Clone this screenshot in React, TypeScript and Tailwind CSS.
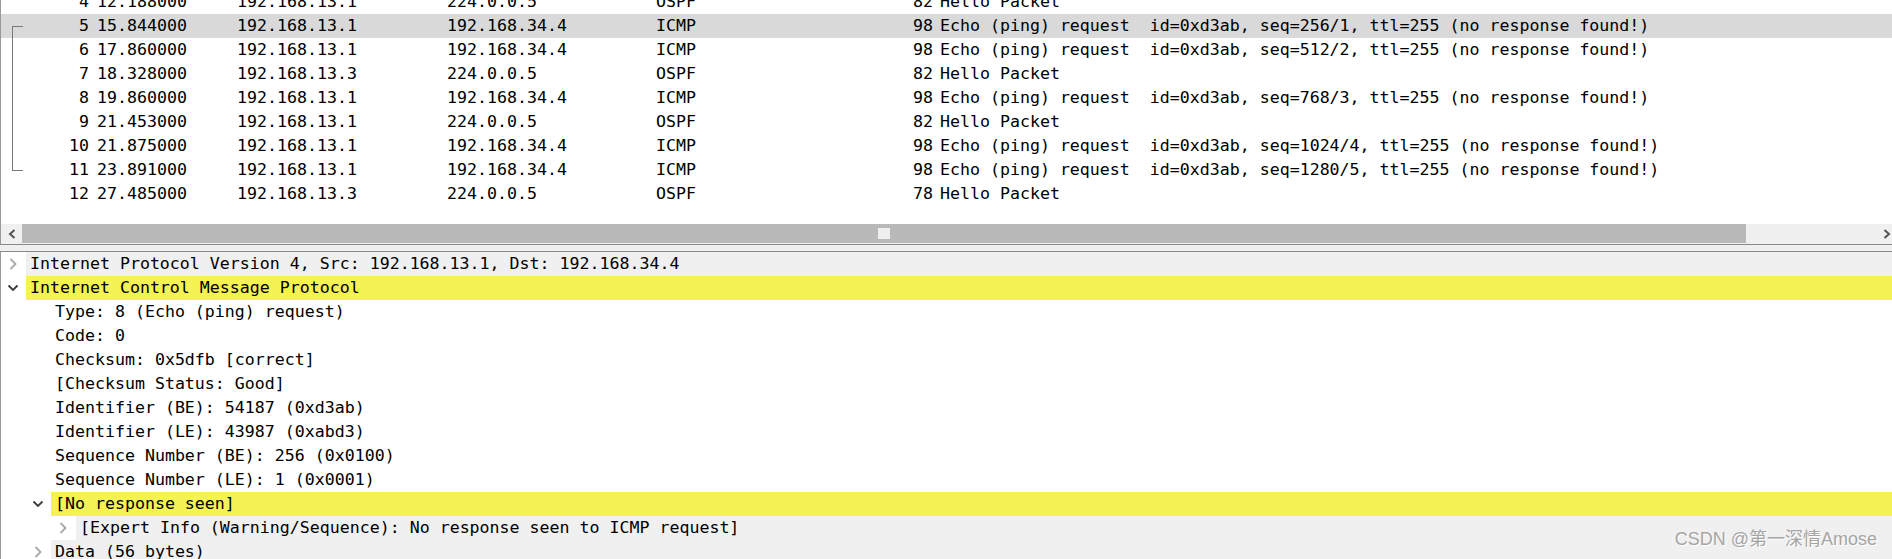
import React from "react";

type Pkt = { no: number; time: string; src: string; dst: string; proto: string; len: number; info: string };

const echo = (seq: string) =>
  `Echo (ping) request  id=0xd3ab, seq=${seq}, ttl=255 (no response found!)`;

const packets: Pkt[] = [
  { no: 4, time: "12.188000", src: "192.168.13.1", dst: "224.0.0.5", proto: "OSPF", len: 82, info: "Hello Packet" },
  { no: 5, time: "15.844000", src: "192.168.13.1", dst: "192.168.34.4", proto: "ICMP", len: 98, info: echo("256/1") },
  { no: 6, time: "17.860000", src: "192.168.13.1", dst: "192.168.34.4", proto: "ICMP", len: 98, info: echo("512/2") },
  { no: 7, time: "18.328000", src: "192.168.13.3", dst: "224.0.0.5", proto: "OSPF", len: 82, info: "Hello Packet" },
  { no: 8, time: "19.860000", src: "192.168.13.1", dst: "192.168.34.4", proto: "ICMP", len: 98, info: echo("768/3") },
  { no: 9, time: "21.453000", src: "192.168.13.1", dst: "224.0.0.5", proto: "OSPF", len: 82, info: "Hello Packet" },
  { no: 10, time: "21.875000", src: "192.168.13.1", dst: "192.168.34.4", proto: "ICMP", len: 98, info: echo("1024/4") },
  { no: 11, time: "23.891000", src: "192.168.13.1", dst: "192.168.34.4", proto: "ICMP", len: 98, info: echo("1280/5") },
  { no: 12, time: "27.485000", src: "192.168.13.3", dst: "224.0.0.5", proto: "OSPF", len: 78, info: "Hello Packet" },
];

type Node = { level: number; text: string; state: "open" | "closed" | "leaf"; bg: "none" | "gray" | "yellow" };

const tree: Node[] = [
  { level: 0, text: "Internet Protocol Version 4, Src: 192.168.13.1, Dst: 192.168.34.4", state: "closed", bg: "gray" },
  { level: 0, text: "Internet Control Message Protocol", state: "open", bg: "yellow" },
  { level: 1, text: "Type: 8 (Echo (ping) request)", state: "leaf", bg: "none" },
  { level: 1, text: "Code: 0", state: "leaf", bg: "none" },
  { level: 1, text: "Checksum: 0x5dfb [correct]", state: "leaf", bg: "none" },
  { level: 1, text: "[Checksum Status: Good]", state: "leaf", bg: "none" },
  { level: 1, text: "Identifier (BE): 54187 (0xd3ab)", state: "leaf", bg: "none" },
  { level: 1, text: "Identifier (LE): 43987 (0xabd3)", state: "leaf", bg: "none" },
  { level: 1, text: "Sequence Number (BE): 256 (0x0100)", state: "leaf", bg: "none" },
  { level: 1, text: "Sequence Number (LE): 1 (0x0001)", state: "leaf", bg: "none" },
  { level: 1, text: "[No response seen]", state: "open", bg: "yellow" },
  { level: 2, text: "[Expert Info (Warning/Sequence): No response seen to ICMP request]", state: "closed", bg: "gray" },
  { level: 1, text: "Data (56 bytes)", state: "closed", bg: "gray" },
];

function Bracket({ no }: { no: number }) {
  if (no === 5)
    return <div className="absolute left-[11px] top-[12px] bottom-0 w-[11px] border-l border-t border-[#7a7a7a]" />;
  if (no === 11)
    return <div className="absolute left-[11px] top-0 h-[13px] w-[11px] border-l border-b border-[#7a7a7a]" />;
  if (no > 5 && no < 11) return <div className="absolute left-[11px] top-0 bottom-0 w-px bg-[#7a7a7a]" />;
  return null;
}

function Chevron({ state }: { state: Node["state"] }) {
  if (state === "leaf") return null;
  if (state === "open")
    return (
      <svg width="12" height="8" viewBox="0 0 12 8" className="block">
        <polyline points="1.5,1.5 6,6 10.5,1.5" fill="none" stroke="#3a3a3a" strokeWidth="1.8" />
      </svg>
    );
  return (
    <svg width="8" height="12" viewBox="0 0 8 12" className="block">
      <polyline points="1.5,1 6.5,6 1.5,11" fill="none" stroke="#a8a8a8" strokeWidth="1.8" />
    </svg>
  );
}

export default function App() {
  return (
    <div className="relative w-[1892px] h-[559px] overflow-hidden bg-white text-black font-['DejaVu_Sans_Mono',monospace] text-[16.6px]">
      {/* packet list pane */}
      <div className="flex flex-col h-[244px] border-l border-[#999999]">
        <div className="h-[224px] overflow-hidden">
          <div className="-mt-[10px] flex flex-col">
            {packets.map((p) => (
              <div
                key={p.no}
                className={`flex h-[24px] items-center whitespace-pre leading-[24px] ${p.no === 5 ? "bg-[#d9d9d9]" : ""}`}
              >
                <div className="relative h-full w-[92px] shrink-0 pr-[4px] text-right">
                  <Bracket no={p.no} />
                  {p.no}
                </div>
                <div className="w-[140px] shrink-0 pl-[4px]">{p.time}</div>
                <div className="w-[210px] shrink-0 pl-[4px]">{p.src}</div>
                <div className="w-[209px] shrink-0 pl-[4px]">{p.dst}</div>
                <div className="w-[218px] shrink-0 pl-[4px]">{p.proto}</div>
                <div className="w-[67px] shrink-0 pr-[4px] text-right">{p.len}</div>
                <div className="flex-1 pl-[3px]">{p.info}</div>
              </div>
            ))}
          </div>
        </div>
        {/* horizontal scrollbar */}
        <div className="flex h-[20px] bg-[#f0f0f0]">
          <div className="flex h-[19px] w-[21px] shrink-0 items-center justify-center">
            <svg width="8" height="10" viewBox="0 0 8 10">
              <polyline points="6.5,1 2,5 6.5,9" fill="none" stroke="#555555" strokeWidth="2" />
            </svg>
          </div>
          <div className="flex h-[19px] w-[1724px] shrink-0 items-center justify-center bg-[#b9b9b9]">
            <div className="h-[11px] w-[12px] bg-[#efefef]" />
          </div>
          <div className="flex h-[19px] flex-1 items-center justify-end pr-[1px]">
            <svg width="8" height="10" viewBox="0 0 8 10">
              <polyline points="1.5,1 6,5 1.5,9" fill="none" stroke="#555555" strokeWidth="2" />
            </svg>
          </div>
        </div>
      </div>

      {/* splitter */}
      <div className="h-px bg-[#848992]" />
      <div className="h-[6px] bg-[#f0f0f0]" />
      <div className="h-px bg-[#848992]" />

      {/* packet details pane */}
      <div className="flex flex-col border-l border-[#999999]">
        {tree.map((n, i) => (
          <div key={i} className="flex h-[24px] items-stretch whitespace-pre leading-[24px]">
            <div
              className={`shrink-0 ${n.level === 0 ? "w-[0px]" : n.level === 1 ? "w-[25px]" : "w-[50px]"}`}
            />
            <div className="flex w-[25px] shrink-0 items-center justify-center pr-[1px]">
              <Chevron state={n.state} />
            </div>
            <div
              className={`flex-1 pl-[4px] ${
                n.bg === "yellow" ? "bg-[#f5f253]" : n.bg === "gray" ? "bg-[#f0f0f0]" : ""
              }`}
            >
              {n.text}
            </div>
          </div>
        ))}
      </div>

      {/* watermark */}
      <div className="absolute right-[15px] bottom-[9px] leading-[22px] text-[18px] text-[#a5a5a5] font-['Liberation_Sans','Noto_Sans_CJK_SC',sans-serif] [text-shadow:1px_1px_0_#ffffff]">
        CSDN @第一深情Amose
      </div>
    </div>
  );
}
